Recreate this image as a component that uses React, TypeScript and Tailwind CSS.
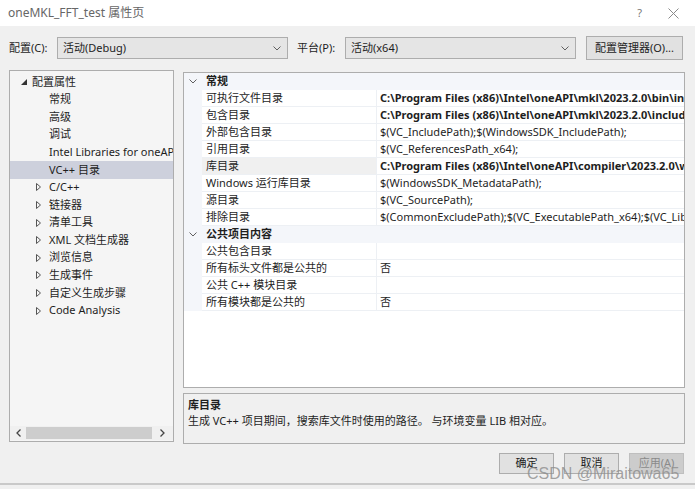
import { ReactNode } from 'react';

type Row = { name: string; value: string; bold?: boolean; selected?: boolean };
type Section = { title: string; rows: Row[] };

const sections: Section[] = [
  {
    title: '常规',
    rows: [
      { name: '可执行文件目录', value: 'C:\\Program Files (x86)\\Intel\\oneAPI\\mkl\\2023.2.0\\bin\\intel64;$(ExecutablePath)', bold: true },
      { name: '包含目录', value: 'C:\\Program Files (x86)\\Intel\\oneAPI\\mkl\\2023.2.0\\include;$(IncludePath)', bold: true },
      { name: '外部包含目录', value: '$(VC_IncludePath);$(WindowsSDK_IncludePath);' },
      { name: '引用目录', value: '$(VC_ReferencesPath_x64);' },
      { name: '库目录', value: 'C:\\Program Files (x86)\\Intel\\oneAPI\\compiler\\2023.2.0\\windows\\compiler\\lib\\intel64_win', bold: true, selected: true },
      { name: 'Windows 运行库目录', value: '$(WindowsSDK_MetadataPath);' },
      { name: '源目录', value: '$(VC_SourcePath);' },
      { name: '排除目录', value: '$(CommonExcludePath);$(VC_ExecutablePath_x64);$(VC_LibraryPath_x64)' },
    ],
  },
  {
    title: '公共项目内容',
    rows: [
      { name: '公共包含目录', value: '' },
      { name: '所有标头文件都是公共的', value: '否' },
      { name: '公共 C++ 模块目录', value: '' },
      { name: '所有模块都是公共的', value: '否' },
    ],
  },
];

const treeChildren = ['常规', '高级', '调试', 'Intel Libraries for oneAPI', 'VC++ 目录'];
const treeCollapsed = ['C/C++', '链接器', '清单工具', 'XML 文档生成器', '浏览信息', '生成事件', '自定义生成步骤', 'Code Analysis'];

function Chevron() {
  return (
    <svg width="8" height="5" viewBox="0 0 8 5" className="flex-shrink-0">
      <polyline points="0.5,0.5 4,4 7.5,0.5" fill="none" stroke="#606060" strokeWidth="1" />
    </svg>
  );
}

function Select({ children }: { children: ReactNode }) {
  return (
    <div className="w-[231px] h-[22px] bg-[#e5e5e5] border border-[#adadad] flex items-center justify-between pl-[5px] pr-[6px]">
      <span>{children}</span>
      <Chevron />
    </div>
  );
}

function Button({ children, disabled }: { children: ReactNode; disabled?: boolean }) {
  return (
    <div
      className={`w-[55px] h-[21px] border flex items-center justify-center ${
        disabled ? 'bg-[#cccccc] border-[#bfbfbf] text-[#8a8a8a]' : 'bg-[#e1e1e1] border-[#adadad] text-[#1e1e1e]'
      }`}
    >
      {children}
    </div>
  );
}

export default function App() {
  return (
    <div className="w-[695px] h-[489px] bg-[#f0f0f0] flex flex-col relative overflow-hidden text-[11px] text-[#1e1e1e] font-['Noto_Sans','Noto_Sans_CJK_SC',sans-serif]">
      {/* Title bar */}
      <div className="h-[26px] bg-white flex items-center justify-between pl-[8px] pr-[16px] flex-shrink-0">
        <span className="text-[12px] text-[#666666]">oneMKL_FFT_test 属性页</span>
        <div className="flex items-center gap-[26px] text-[#777777]">
          <span className="text-[11px]">?</span>
          <svg width="11" height="11" viewBox="0 0 11 11">
            <path d="M0.5 0.5 L10.5 10.5 M10.5 0.5 L0.5 10.5" stroke="#8a8a8a" strokeWidth="1" />
          </svg>
        </div>
      </div>

      {/* Toolbar */}
      <div className="flex items-center h-[24px] mt-[10px] pl-[9px]">
        <span className="w-[48px]">配置(C):</span>
        <Select>活动(Debug)</Select>
        <span className="ml-[9px] w-[48px]">平台(P):</span>
        <Select>活动(x64)</Select>
        <div className="ml-[10px] w-[97px] h-[24px] bg-[#e1e1e1] border border-[#adadad] flex items-center justify-center">
          配置管理器(O)...
        </div>
      </div>

      {/* Main */}
      <div className="flex mt-[10px] pl-[9px]">
        {/* Tree */}
        <div className="w-[165px] h-[372px] bg-[#f5f5f5] border border-[#adadad] flex flex-col">
          <div className="flex-1 pt-[2px] overflow-hidden">
            <div className="h-[17.6px] flex items-center pl-[11px]">
              <svg width="6" height="6" viewBox="0 0 6 6" className="mr-[5px]">
                <polygon points="6,0 6,6 0,6" fill="#333333" />
              </svg>
              <span>配置属性</span>
            </div>
            {treeChildren.map((t) => (
              <div
                key={t}
                className={`h-[17.6px] flex items-center pl-[39px] whitespace-nowrap overflow-hidden ${
                  t === 'VC++ 目录' ? 'bg-[#cdd0dc]' : ''
                }`}
              >
                {t}
              </div>
            ))}
            {treeCollapsed.map((t) => (
              <div key={t} className="h-[17.6px] flex items-center pl-[26px] whitespace-nowrap">
                <svg width="5" height="8" viewBox="0 0 5 8" className="mr-[8px]">
                  <polygon points="0.5,0.5 4.5,4 0.5,7.5" fill="none" stroke="#555555" strokeWidth="1" />
                </svg>
                <span>{t}</span>
              </div>
            ))}
          </div>
          <div className="h-[14px] flex items-center bg-[#f0f0f0] mb-[1px]">
            <div className="w-[16px] flex items-center justify-center">
              <svg width="5" height="8" viewBox="0 0 5 8">
                <polyline points="4.5,0.5 1,4 4.5,7.5" fill="none" stroke="#444444" strokeWidth="1.3" />
              </svg>
            </div>
            <div className="w-[126px] h-[12px] bg-[#cdcdcd]" />
            <div className="flex-1 flex items-center justify-center">
              <svg width="5" height="8" viewBox="0 0 5 8">
                <polyline points="0.5,0.5 4,4 0.5,7.5" fill="none" stroke="#444444" strokeWidth="1.3" />
              </svg>
            </div>
          </div>
        </div>

        {/* Right column */}
        <div className="ml-[9px] w-[502px] pt-[2px] flex flex-col gap-[5px]">
          <div className="h-[316px] bg-white border border-[#adadad] overflow-hidden">
            {sections.map((s) => (
              <div key={s.title}>
                <div className="h-[17px] flex items-center bg-[#f4f6fa] font-bold">
                  <div className="w-[18px] flex justify-center">
                    <Chevron />
                  </div>
                  <span className="pl-[4px]">{s.title}</span>
                </div>
                {s.rows.map((r) => (
                  <div key={r.name} className="h-[17px] flex">
                    <div className="w-[18px] bg-[#f4f6fa]" />
                    <div
                      className={`w-[175px] flex items-center pl-[4px] border-b border-r border-[#edf0f4] whitespace-nowrap overflow-hidden ${
                        r.selected ? 'bg-[#f0f0f0]' : ''
                      }`}
                    >
                      {r.name}
                    </div>
                    <div
                      className={`flex-1 min-w-0 flex items-center pl-[3px] border-b border-[#edf0f4] whitespace-nowrap overflow-hidden ${
                        r.bold ? 'font-bold' : ''
                      }`}
                    >
                      {r.value}
                    </div>
                  </div>
                ))}
              </div>
            ))}
          </div>
          <div className="h-[51px] bg-[#f0f0f0] border border-[#adadad] px-[4px] pt-[3px]">
            <div className="font-bold leading-[16px]">库目录</div>
            <div className="leading-[16px]">生成 VC++ 项目期间，搜索库文件时使用的路径。 与环境变量 LIB 相对应。</div>
          </div>
        </div>
      </div>

      {/* Buttons */}
      <div className="flex justify-end gap-[10px] mt-[9px] pr-[11px]">
        <Button>确定</Button>
        <Button>取消</Button>
        <Button disabled>应用(A)</Button>
      </div>

      <div className="flex-1" />
      <div className="h-[2px] bg-[#c9c9c9] mb-[4px]" />

      {/* Watermark */}
      <div className="absolute left-[527px] top-[464px] text-[16px] leading-[20px] text-[#8c8c8c]/80 font-['Liberation_Sans',sans-serif] pointer-events-none">
        CSDN @Miraitowa65
      </div>
    </div>
  );
}
